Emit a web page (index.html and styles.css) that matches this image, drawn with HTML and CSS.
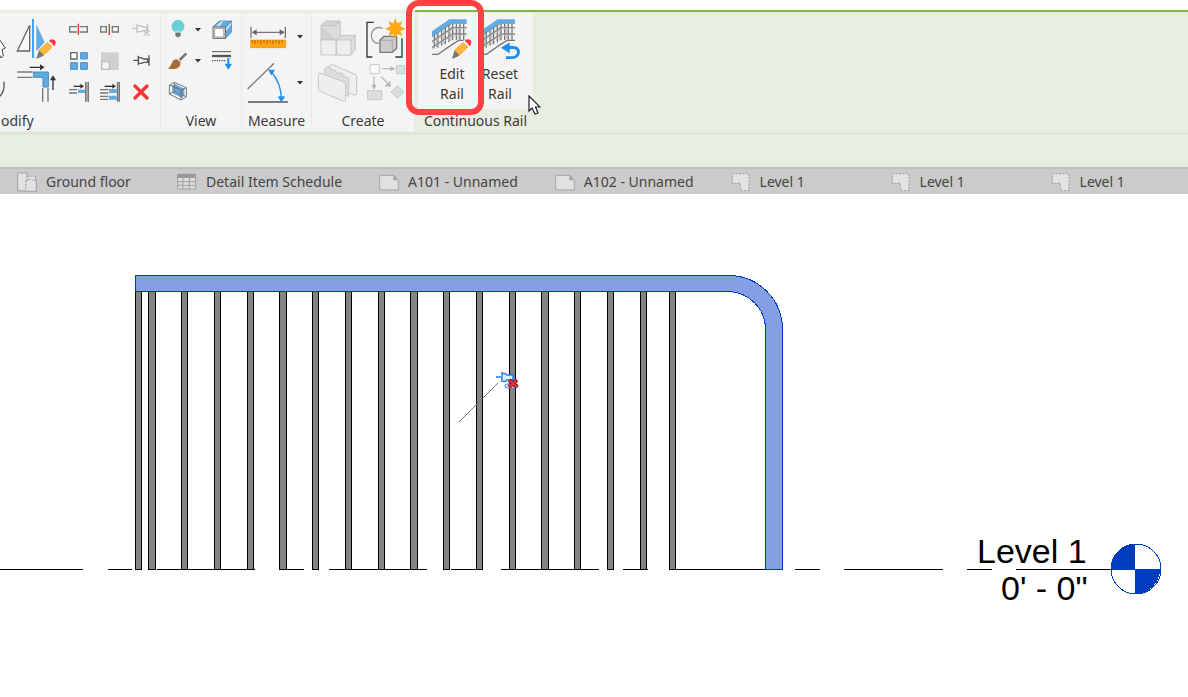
FILE: index.html
```html
<!DOCTYPE html>
<html lang="en">
<head>
<meta charset="utf-8">
<title>Continuous Rail</title>
<link rel="stylesheet" href="styles.css">
</head>
<body>
<svg class="defs" aria-hidden="true">
  <defs>
    <symbol id="caret" viewBox="0 0 6 4"><path d="M0 0H6L3 3.6Z" fill="#333"/></symbol>
    <symbol id="pencil" viewBox="0 0 60 60">
      <path d="M9 33 24 48 20 52 1 60Z" fill="#777"/>
      <path d="M9 33 35 10 49 24 24 48Z" fill="#fcb53d" stroke="#e89f25" stroke-width="2"/>
      <path d="M35 9 40 4 55 19 50 24Z" fill="#f4f4f4"/>
      <path d="M40 5Q46-3 56 3Q63 11 55 20L52 21Q50 10 40 8Z" fill="#ff3440"/>
    </symbol>
    <symbol id="railing" viewBox="0 0 108 114">
      <path d="M7 45V90M18 43V88M29 35V82M40 26V78M51 19V72M62 16V66M73 16V65M84 16V64M95 16V64" stroke="#777" stroke-width="4" fill="none"/>
      <path d="M13 49V86M35 38V78M57 25V68M79 22V62" stroke="#bbb" stroke-width="3" fill="none"/>
      <path d="M0 70 62 28H104M0 88 63 47H104" stroke="#888" stroke-width="4" fill="none"/>
      <path d="M0 74 64 32H104M0 92 63 51H104" stroke="#ccc" stroke-width="2" fill="none"/>
      <path d="M0 108H18L61 78 80 66H104" stroke="#777" stroke-width="4" fill="none"/>
      <path d="M0 39 52 3H104V15H61L0 55Z" fill="#62abdf"/>
      <path d="M0 55 61 15H104" stroke="#4d82a8" stroke-width="2" fill="none"/>
    </symbol>
    <symbol id="sheet" viewBox="0 0 60 60">
      <path d="M2 10H44L58 24V54H2Z" fill="#e0e0e0" stroke="#a4a4a4" stroke-width="3"/>
      <path d="M43 10V25H58Z" fill="#a4a4a4"/>
    </symbol>
    <symbol id="region" viewBox="0 0 60 60">
      <path d="M4 5H54V56H28V34H4Z" fill="#e2e2e2" stroke="#a8a8a8" stroke-width="4" stroke-dasharray="6 4"/>
    </symbol>
  </defs>
</svg>

<header class="ribbon">
  <section class="panel panel-modify">
    <div class="tools">
      <div class="stack stack-edge">
        <button aria-label="Select"><svg width="14" height="46" viewBox="0 42 42 138"><path d="M-10 110 0 121 16 144 6 149 10 168 3 174-4 158" fill="#fff" stroke="#444" stroke-width="3"/></svg></button>
        <button aria-label="Rotate"><svg width="14" height="46" viewBox="0 180 42 138"><path d="M12 245Q15 276-4 292" fill="none" stroke="#555" stroke-width="4"/></svg></button>
      </div>
      <div class="stack">
        <button aria-label="Mirror"><svg width="44" height="46" viewBox="42 42 132 138">
          <path d="M89 76V153H52Z" fill="#f8f8f8" stroke="#666" stroke-width="4"/>
          <path d="M109 73 134 127 109 154Z" fill="#62abdf"/>
          <path d="M99 57V174" stroke="#2694ed" stroke-width="5"/>
          <use href="#pencil" x="108" y="117" width="60" height="60"/></svg></button>
        <button aria-label="Trim to corner"><svg width="44" height="46" viewBox="42 180 132 138">
          <path d="M89 202H124M159 270V238" stroke="#333" stroke-width="4"/>
          <path d="M120 193 134 202 120 211ZM150 241 159 226 168 241Z" fill="#333"/>
          <path d="M52 216H98M52 232H98M128 264V305M144 264V305" stroke="#777" stroke-width="4"/>
          <path d="M101 216H145V261H129V232H101Z" fill="#62abdf" stroke="#3f8ec6" stroke-width="3"/></svg></button>
      </div>
      <div class="grid3">
        <button aria-label="Split element"><svg width="20" height="20" viewBox="207 60 60 60"><path d="M231 80H209V96H231M239 80H262V96H239" fill="none" stroke="#777" stroke-width="4"/><path d="M235 71V105" stroke="#e33" stroke-width="4"/></svg></button>
        <button aria-label="Split with gap"><svg width="20" height="20" viewBox="300 60 60 60"><path d="M302 80H319V96H302ZM337 80H355V96H337Z" fill="none" stroke="#777" stroke-width="4"/><path d="M328 71V105" stroke="#e33" stroke-width="4"/></svg></button>
        <button aria-label="Unpin"><svg width="20" height="20" viewBox="393 60 60 60"><path d="M396 85H411M411 71V99M413 77H421L428 81H440V92H428L421 95H413M443 71V93" fill="none" stroke="#c2c2c2" stroke-width="4"/><path d="M431 92 448 107M448 92 431 107" stroke="#c2c2c2" stroke-width="4"/></svg></button>
        <button aria-label="Array"><svg width="20" height="20" viewBox="207 153 60 60"><path d="M212 158H231V177H212Z" fill="#fff" stroke="#666" stroke-width="4"/><path d="M242 158H262V177H242ZM212 188H232V208H212ZM242 188H262V208H242Z" fill="#62abdf" stroke="#3f8ec6" stroke-width="3"/></svg></button>
        <button aria-label="Scale"><svg width="20" height="20" viewBox="300 153 60 60"><path d="M303 157H356V210H303Z" fill="#d0d0d0"/><path d="M305 185H328V208H305Z" fill="#f4f4f4" stroke="#bbb" stroke-width="4"/></svg></button>
        <button aria-label="Pin"><svg width="20" height="20" viewBox="393 153 60 60"><path d="M400 181H415M415 167V196M417 173H424L431 177H443V187H431L424 190H417M447 166V197" fill="none" stroke="#555" stroke-width="4"/></svg></button>
        <button aria-label="Trim single"><svg width="20" height="20" viewBox="207 246 60 60"><path d="M207 269H231M207 279H231" stroke="#777" stroke-width="4"/><path d="M221 259H245" stroke="#333" stroke-width="4"/><path d="M241 251 252 259 241 266Z" fill="#333"/><path d="M234 269H257V279H234Z" fill="#62abdf"/><path d="M255 246H267V305H255Z" fill="#bbb"/><path d="M257 246V305M265 246V305" stroke="#777" stroke-width="4"/></svg></button>
        <button aria-label="Trim multiple"><svg width="20" height="20" viewBox="300 246 60 60"><path d="M300 269H325M300 279H325M300 289H325M300 298H325" stroke="#777" stroke-width="4"/><path d="M314 259H340" stroke="#333" stroke-width="4"/><path d="M337 251 348 259 337 266Z" fill="#333"/><path d="M327 267H350V279H327ZM327 287H350V299H327Z" fill="#62abdf"/><path d="M353 246V305M359 246V305" stroke="#777" stroke-width="5"/></svg></button>
        <button aria-label="Delete"><svg width="20" height="20" viewBox="393 246 60 60"><path d="M405 258 441 294M441 258 405 294" stroke="#f83434" stroke-width="10" stroke-linecap="round"/></svg></button>
      </div>
    </div>
    <h2 class="title title-left">odify</h2>
  </section>

  <section class="panel panel-view">
    <div class="tools view-grid">
      <button aria-label="Hide in view"><svg width="20" height="20" viewBox="39 60 60 60"><circle cx="69" cy="79" r="18" fill="#66d0d8" stroke="#53c1ca" stroke-width="2"/><path d="M61 92H77V97H61Z" fill="#a4dbe0"/><path d="M61 98H77V106L72 112H66L61 106Z" fill="#777"/></svg></button>
      <button aria-label="Hide options"><svg width="6" height="4"><use href="#caret"/></svg></button>
      <button aria-label="Selection box"><svg width="20" height="20" viewBox="171 60 60 60"><path d="M173 80 194 63H230V95L210 116Z" fill="#62abdf"/><path d="M182 80 199 63H206L192 80ZM213 84 230 65V72L213 92Z" fill="#d9e7f0"/><path d="M174 80 193 63H230V96L211 116M211 81 230 63" fill="none" stroke="#3c7cae" stroke-width="2"/><path d="M174 81H211V115H174Z" fill="#ddd" stroke="#666" stroke-width="3"/><path d="M179 86H206V111H179Z" fill="#fff" stroke="#888" stroke-width="2"/></svg></button>
      <button aria-label="Override graphics"><svg width="20" height="20" viewBox="39 153 60 60"><path d="M39 206Q47 200 51 188Q56 177 66 178L76 187Q79 204 57 207Z" fill="#a66b32"/><path d="M74 180 94 160" stroke="#777" stroke-width="8"/><path d="M69 177 78 186" stroke="#ddd" stroke-width="3"/></svg></button>
      <button aria-label="Override options"><svg width="6" height="4"><use href="#caret"/></svg></button>
      <button aria-label="Linework"><svg width="20" height="20" viewBox="171 153 60 60"><path d="M171 155H228" stroke="#555" stroke-width="3"/><path d="M171 168H228" stroke="#555" stroke-width="7"/><path d="M171 182H214" stroke="#333" stroke-width="3" stroke-dasharray="4 3"/><path d="M220 174V195" stroke="#1d8eed" stroke-width="6"/><path d="M209 191H231L220 209Z" fill="#1d8eed"/></svg></button>
      <button aria-label="Displace elements"><svg width="20" height="20" viewBox="39 246 60 60"><path d="M52 257 61 252 88 266V287L80 293 52 279Z" fill="#62abdf"/><path d="M52 257 80 270V293M80 270 88 266" fill="none" stroke="#4182b0" stroke-width="3"/><path d="M43 255 58 247 94 263V290L78 300 43 282ZM43 255 78 270 94 263M78 270V300M58 247V274L43 282M58 274 94 290" fill="none" stroke="#777" stroke-width="3"/></svg></button>
    </div>
    <h2 class="title">View</h2>
  </section>

  <section class="panel panel-measure">
    <div class="tools measure-grid">
      <button aria-label="Measure"><svg width="46" height="46" viewBox="270 42 138 138"><path d="M288 80V114M391 80V114M296 97H382" stroke="#777" stroke-width="4"/><path d="M305 88 290 97 305 106ZM374 88 389 97 374 106Z" fill="#666"/><path d="M287 120H392V143H287Z" fill="#ffa515" stroke="#ee9400" stroke-width="2"/><path d="M292 121V128M300 121V132M309 121V128M318 121V132M327 121V128M336 121V132M345 121V128M354 121V132M363 121V128M372 121V132M381 121V128" stroke="#a36200" stroke-width="3"/></svg></button>
      <button aria-label="Measure options"><svg width="6" height="4"><use href="#caret"/></svg></button>
      <button aria-label="Angle"><svg width="46" height="46" viewBox="270 180 138 138"><path d="M278 267 357 190" stroke="#777" stroke-width="4"/><path d="M279 306H399" stroke="#555" stroke-width="4"/><path d="M350 216Q378 251 379 294" fill="none" stroke="#1d8eed" stroke-width="4"/><path d="M341 210 358 211 349 225ZM370 290H389L379 305Z" fill="#1d8eed" stroke="#1d8eed" stroke-width="2"/></svg></button>
      <button aria-label="Angle options"><svg width="6" height="4"><use href="#caret"/></svg></button>
    </div>
    <h2 class="title">Measure</h2>
  </section>

  <section class="panel panel-create">
    <div class="tools create-grid">
      <button aria-label="Create assembly"><svg width="46" height="46" viewBox="27 42 138 138"><g stroke="#c5c5c5" stroke-width="3" stroke-linejoin="round"><path d="M48 77 62 63H104L93 77V120H48Z" fill="#d2d2d2"/><path d="M48 77H93L106 63V107L93 120" fill="#dcdcdc"/><path d="M48 120H93V165H48Z" fill="#eee"/><path d="M95 120 108 106H151V149L138 165H95Z" fill="#ddd"/><path d="M95 120H138V165H95ZM138 120 151 107" fill="#eee"/></g></svg></button>
      <button aria-label="Create similar"><svg width="46" height="46" viewBox="177 42 138 138"><path d="M206 67H186V171H202M271 171H291V115" fill="none" stroke="#333" stroke-width="4"/><path d="M233 85Q214 77 202 94Q194 112 207 126Q214 132 222 128" fill="#f4f4f4" stroke="#999" stroke-width="4"/><path d="M225 121 237 109H275V145L262 157H225Z" fill="#ccc" stroke="#777" stroke-width="4" stroke-linejoin="round"/><path d="M226 121H262V156M262 121 275 109" fill="none" stroke="#999" stroke-width="2"/><path d="M271 54 277 70 292 64 286 79 302 86 286 93 292 108 277 102 271 117 265 102 250 108 256 93 240 86 256 79 250 64 265 70Z" fill="#ffa814"/></svg></button>
      <button aria-label="Create group"><svg width="46" height="46" viewBox="27 180 138 138"><g fill="#ddd" stroke="#c6c6c6" stroke-width="3" stroke-linejoin="round"><path d="M75 197Q77 192 82 194L150 223Q155 226 155 231V281Q153 288 147 285L75 256Z" fill="#eee"/><path d="M58 207 71 199 76 208 91 211 96 220 111 219 117 230 131 234V289L58 262Z"/><path d="M40 224Q40 217 48 220L117 246Q123 249 122 255V300Q120 306 114 303L45 274Q40 271 40 266Z" fill="#eee"/></g></svg></button>
      <button aria-label="Create parts"><svg width="46" height="46" viewBox="177 180 138 138"><g fill="#ddd" stroke="#c8c8c8" stroke-width="3"><path d="M195 194H223V221H195Z" fill="#fafafa"/><path d="M274 197H299V221H274ZM188 272H231V299H188ZM277 257 296 276 277 295 258 276Z"/></g><path d="M232 206H259M207 230V257M229 230 247 249" stroke="#bababa" stroke-width="4"/><path d="M256 198 271 206 256 214ZM199 254 207 269 215 254ZM256 242 257 261 238 259Z" fill="#b5b5b5"/></svg></button>
    </div>
    <h2 class="title">Create</h2>
  </section>

  <section class="panel-rail">
    <div class="tools rail-tools">
      <button class="rail-button rail-edit"><svg width="44" height="46" viewBox="90 42 132 138"><use href="#railing" x="96" y="55" width="108" height="114"/><path d="M157 177V154L189 122 206 116V177Z" fill="#f4f4f4"/><use href="#pencil" x="155" y="117" width="60" height="60"/></svg><span>Edit<br>Rail</span></button>
      <button class="rail-button rail-reset"><svg width="44" height="46" viewBox="234 42 132 138"><use href="#railing" x="241" y="55" width="108" height="114"/><path d="M297 177V154L325 130H360V177Z" fill="#f4f4f4"/><path d="M303 143 329 127V138H340Q360 139 360 157Q358 176 337 177H318V169H337Q350 168 351 157Q350 147 340 147H329V160Z" fill="#1d8eed"/></svg><span>Reset<br>Rail</span></button>
    </div>
    <h2 class="title">Continuous Rail</h2>
  </section>
  <div class="ribbon-rest"></div>
</header>
<div class="options-bar"></div>

<nav class="tabs">
  <a href="#" class="tab"><svg width="20" height="20" viewBox="0 0 60 60"><path d="M2 3H27V8H56V60H25V54H2Z" fill="#e2e2e2"/><path d="M27 57H2V3H30V12H56V23M25 54V58H58V24H46M30 28V22H40" fill="none" stroke="#a2a2a2" stroke-width="3"/><path d="M26 25V58M30 12V20" fill="none" stroke="#aaa" stroke-width="4" stroke-dasharray="6 4"/></svg>Ground floor</a>
  <a href="#" class="tab"><svg width="20" height="20" viewBox="0 0 60 60"><path d="M2 7H56V51H2Z" fill="#ddd" stroke="#a0a0a0" stroke-width="3"/><path d="M1 6H57V18H1Z" fill="#999"/><path d="M2 29H56M2 40H56M18 17V51M37 17V51" stroke="#a0a0a0" stroke-width="3"/></svg>Detail Item Schedule</a>
  <a href="#" class="tab"><svg width="20" height="20"><use href="#sheet"/></svg>A101 - Unnamed</a>
  <a href="#" class="tab"><svg width="20" height="20"><use href="#sheet"/></svg>A102 - Unnamed</a>
  <a href="#" class="tab"><svg width="20" height="20"><use href="#region"/></svg>Level 1</a>
  <a href="#" class="tab"><svg width="20" height="20"><use href="#region"/></svg>Level 1</a>
  <a href="#" class="tab"><svg width="20" height="20"><use href="#region"/></svg>Level 1</a>
</nav>

<main class="canvas">
  <svg class="drawing" viewBox="0 194 1188 503" role="img" aria-label="Railing elevation">
    <g class="crisp">
      <path class="level-line" d="M0 569.5H83M108 569.5H132M157 569.5H255M279 569.5H304M329 569.5H427M451 569.5H482M501 569.5H599M623 569.5H648M669 569.5H766M795 569.5H820M844 569.5H943M967 569.5H992M1016 569.5H1111"/>
      <g class="balusters">
        <path d="M135.5 291.5h6v278h-6zM148.5 291.5h7v278h-7zM181.5 291.5h6v278h-6zM214.5 291.5h6v278h-6zM247.5 291.5h6v278h-6zM279.5 291.5h7v278h-7zM312.5 291.5h6v278h-6zM345.5 291.5h6v278h-6zM378.5 291.5h6v278h-6z"/>
        <path d="M410.5 291.5h7v278h-7zM443.5 291.5h6v278h-6zM476.5 291.5h6v278h-6zM509.5 291.5h6v278h-6zM541.5 291.5h7v278h-7zM574.5 291.5h6v278h-6zM607.5 291.5h6v278h-6zM640.5 291.5h6v278h-6zM669.5 291.5h6v278h-6z"/>
      </g>
      <path class="top-rail" d="M135.5 275.5H728A54 54 0 0 1 782.5 330V569.5H765.5V330A38 38 0 0 0 728 291.5H135.5Z"/>
      <circle cx="1136" cy="569" r="25" fill="#fff" stroke="#003cbe"/>
      <path d="M1135 570V544A25 25 0 0 0 1111 570ZM1135 569H1160A25 25 0 0 1 1135 594Z" fill="#003cbe"/>
    </g>
    <path d="M459 422 498 383" stroke="#777" stroke-width="1"/>
    <path d="M496 377H501M502 372V382M503 373.500H505L507 375H513V380H507L505 381.500H503" fill="#d5f4ff" stroke="#2877ea" stroke-width="1.500"/>
    <rect x="505" y="384" width="13" height="4" rx="2" fill="#dce7fa" stroke="#4d7fe0"/>
    <path d="M509 380 517 387M517 380 509 387" stroke="#801d20" stroke-width="4"/>
    <path d="M509 380 517 387M517 380 509 387" stroke="#ee3034" stroke-width="2"/>
    <text class="level-text" x="977" y="563">Level 1</text>
    <text class="level-text" x="1001" y="600">0' - 0"</text>
  </svg>
</main>

<div class="highlight"></div>
<svg class="pointer" width="13" height="20" viewBox="0 0 13 20" aria-hidden="true"><path d="M1 1V16L4 13 7 19 10 18 7.500 12H12Z" fill="#fff" stroke="#1d1d2b" stroke-width="1.200"/></svg>
</body>
</html>
```
FILE: styles.css
```css
* { box-sizing: border-box; }

body {
  margin: 0;
  min-height: 100vh;
  display: flex;
  flex-direction: column;
  position: relative;
  overflow: hidden;
  background: #fff;
  color: #3a3a3a;
  font: 14px/20px "Noto Sans", "Open Sans", sans-serif;
}

.defs { position: absolute; width: 0; height: 0; }

button {
  padding: 0;
  border: 0;
  background: none;
  color: inherit;
  font: inherit;
  display: grid;
  place-items: center;
  place-content: center;
  min-width: 0;
}

svg { display: block; }

.ribbon {
  display: flex;
  margin-top: 10px;
  background: #e7eee1;
  border-bottom: 1px solid #d4dbd2;
  height: 124px;
}

.panel {
  margin: 3px 1px 2px 0;
  background: #f4f4f4;
  flex: none;
}

.panel-modify { width: 160px; }
.panel-view { width: 80px; }
.panel-measure { width: 69px; }
.panel-create { width: 102px; }

.tools { display: flex; height: 96px; padding-top: 1px; }

.title {
  margin: 0;
  font-size: 14px;
  line-height: 24px;
  font-weight: 400;
  text-align: center;
  white-space: nowrap;
}

.title-left { text-align: left; padding-left: 1px; }

.stack { display: grid; grid-template-rows: 46px 46px; width: 44px; }
.stack-edge { width: 14px; }

.grid3 {
  display: grid;
  grid-template: repeat(3, 31px) / repeat(3, 31px);
  margin-left: 5px;
}

.view-grid {
  display: grid;
  grid-template: repeat(3, 31px) / 30px 10px 38px;
  padding-left: 2px;
}

.measure-grid {
  display: grid;
  grid-template: repeat(2, 46px) / 52px 12px;
}

.create-grid {
  display: grid;
  grid-template: repeat(2, 46px) / 50px 50px;
}

.panel-rail {
  flex: none;
  width: 118px;
  padding: 1px 0 0 3px;
  border-top: 2px solid #84b63f;
}

.rail-tools { background: #f4f4f4; padding-left: 4px; }

.rail-button { align-content: start; text-align: center; }
.rail-button span { padding-top: 4px; }
.rail-edit { width: 60px; }
.rail-reset { width: 36px; }

.ribbon-rest { flex: 1; border-top: 2px solid #84b63f; }

.options-bar { height: 33px; background: #e7eee1; }

.tabs {
  display: flex;
  height: 27px;
  padding-left: 17px;
  background: #cbcbcb;
  border-top: 2px solid #bdbdbd;
}

.tab {
  display: flex;
  flex: none;
  align-items: center;
  gap: 9px;
  min-width: 160px;
  padding-right: 37px;
  color: #444;
  text-decoration: none;
  white-space: nowrap;
}

.canvas { flex: 1; display: flex; }
.drawing { width: 100%; }
.crisp { shape-rendering: crispEdges; }
.level-line { stroke: #000; fill: none; }
.balusters { fill: #848484; stroke: #000; }
.top-rail { fill: #849fe5; stroke: #003cbe; }
.level-text { font: 34px "Liberation Sans", Arial, sans-serif; fill: #000; }

.highlight {
  position: absolute;
  left: 406px;
  top: 0;
  width: 78px;
  height: 115px;
  border: 6px solid #ff4141;
  border-radius: 13px;
}

.pointer { position: absolute; left: 528px; top: 95px; }
```
